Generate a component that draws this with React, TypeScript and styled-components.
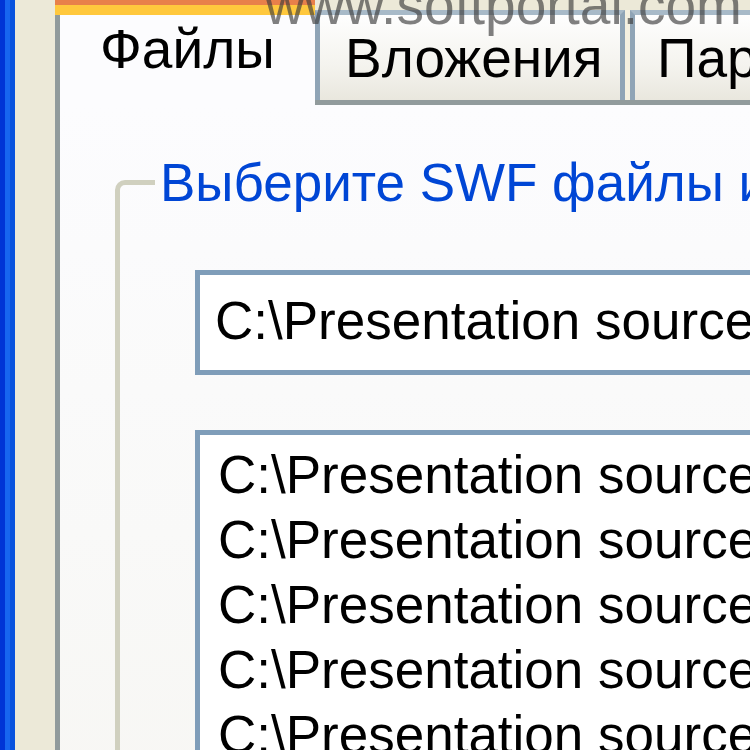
import { FC } from "react";
import styled, { createGlobalStyle } from "styled-components";

const GlobalStyle = createGlobalStyle`
  html, body {
    margin: 0;
    padding: 0;
    width: 750px;
    height: 750px;
    overflow: hidden;
    background: #ece9d8;
  }
`;

const Window = styled.div`
  position: relative;
  display: flex;
  flex-direction: row;
  width: 750px;
  height: 750px;
  overflow: hidden;
  font-family: "Liberation Sans", Arial, sans-serif;
  font-size: 55px;
  line-height: 65px;
  color: #000;
`;

const Frame = styled.div`
  flex: 0 0 15px;
  background: linear-gradient(
    to right,
    #0034d6 0 5px,
    #1765f0 5px 10px,
    #0852de 10px 15px
  );
`;

const Gutter = styled.div`
  flex: 0 0 40px;
  background: #ece9d8;
`;

const TabControl = styled.div`
  display: flex;
  flex-direction: column;
  flex: 0 0 1100px;
`;

const TabStrip = styled.div`
  display: flex;
  flex-direction: row;
  align-items: flex-end;
  height: 100px;
`;

const Tab = styled.div<{ $active?: boolean; $width: number; $pad: number }>`
  box-sizing: border-box;
  position: relative;
  flex: 0 0 ${(p) => p.$width}px;
  white-space: nowrap;
  overflow: hidden;

  ${(p) =>
    p.$active
      ? `
    z-index: 2;
    height: 105px;
    margin-bottom: -5px;
    padding: 12px 0 0 ${p.$pad}px;
    background: #fcfcfe;
    border-top: 5px solid #e8804a;
    box-shadow: inset 0 10px 0 #ffc83d, inset 5px 0 0 #919b9c;
  `
      : `
    height: 90px;
    padding: 11px 0 0 ${p.$pad}px;
    background: linear-gradient(#fefefe, #f4f3ee 60%, #e9e7de);
    border-top: 5px solid #a8bac8;
    border-left: 5px solid #8fa4b6;
    border-right: 5px solid #8fa4b6;
  `}
`;

const TabSpacer = styled.div`
  flex: 0 0 5px;
  height: 90px;
  background: #f4f0e0;
`;

const Panel = styled.div`
  flex: 1;
  border-top: 5px solid #919b9c;
  border-left: 5px solid #919b9c;
  padding: 45px 0 0 55px;
  background: linear-gradient(#fcfcfe, #f9f9f8 50%, #f6f5f1);
  font-size: 53px;
`;

const Group = styled.fieldset`
  margin: 0;
  padding: 0 0 0 35px;
  border: 5px solid #d0d0bf;
  border-top-left-radius: 10px;
  height: 800px;
`;

const GroupLabel = styled.legend`
  padding: 0 5px;
  color: #0046d5;
  line-height: 65px;
`;

const Field = styled.div<{ $top: number; $padTop: number; $height: number }>`
  box-sizing: border-box;
  margin: ${(p) => p.$top}px 0 0 40px;
  height: ${(p) => p.$height}px;
  padding: ${(p) => p.$padTop}px 0 0 15px;
  background: #fff;
  border: 5px solid #7f9db9;
  white-space: nowrap;
  overflow: hidden;
`;

const ListRow = styled.div`
  height: 65px;
  padding-left: 3px;
`;

const Watermark = styled.div`
  position: absolute;
  top: -27px;
  left: 265px;
  z-index: 5;
  color: rgba(60, 60, 60, 0.65);
  white-space: nowrap;
  pointer-events: none;
`;

const path = "C:\\Presentation source\\Тренинг\\intro.swf";

const files = [
  "C:\\Presentation source\\Тренинг\\slide01.swf",
  "C:\\Presentation source\\Тренинг\\slide02.swf",
  "C:\\Presentation source\\Тренинг\\slide03.swf",
  "C:\\Presentation source\\Тренинг\\slide04.swf",
  "C:\\Presentation source\\Тренинг\\slide05.swf",
];

const App: FC = () => {
  return (
    <>
      <GlobalStyle />
      <Window>
        <Frame />
        <Gutter />
        <TabControl>
          <TabStrip>
            <Tab $active $width={260} $pad={45}>
              Файлы
            </Tab>
            <Tab $width={310} $pad={25}>
              Вложения
            </Tab>
            <TabSpacer />
            <Tab $width={300} $pad={22}>
              Параметры
            </Tab>
          </TabStrip>

          <Panel>
            <Group>
              <GroupLabel>Выберите SWF файлы и их порядок</GroupLabel>

              <Field $top={55} $padTop={13} $height={105}>
                {path}
              </Field>

              <Field $top={55} $padTop={7} $height={400}>
                {files.map((f) => (
                  <ListRow key={f}>{f}</ListRow>
                ))}
              </Field>
            </Group>
          </Panel>
        </TabControl>

        <Watermark>www.softportal.com</Watermark>
      </Window>
    </>
  );
};

export default App;
